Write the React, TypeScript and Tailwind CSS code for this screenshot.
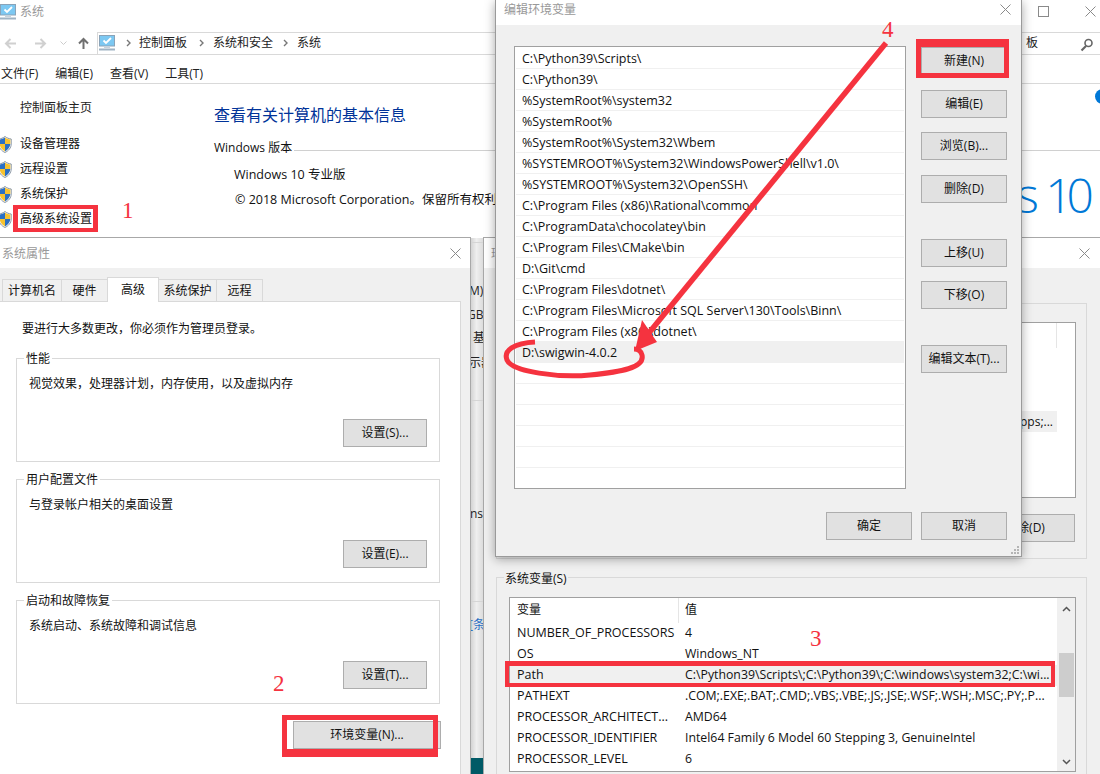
import React from "react";

const sans = "[font-family:'Open_Sans','Noto_Sans_CJK_SC',sans-serif]";

const pathRows = [
  "C:\\Python39\\Scripts\\",
  "C:\\Python39\\",
  "%SystemRoot%\\system32",
  "%SystemRoot%",
  "%SystemRoot%\\System32\\Wbem",
  "%SYSTEMROOT%\\System32\\WindowsPowerShell\\v1.0\\",
  "%SYSTEMROOT%\\System32\\OpenSSH\\",
  "C:\\Program Files (x86)\\Rational\\common",
  "C:\\ProgramData\\chocolatey\\bin",
  "C:\\Program Files\\CMake\\bin",
  "D:\\Git\\cmd",
  "C:\\Program Files\\dotnet\\",
  "C:\\Program Files\\Microsoft SQL Server\\130\\Tools\\Binn\\",
  "C:\\Program Files (x86)\\dotnet\\",
  "D:\\swigwin-4.0.2",
  "",
  "",
  "",
  "",
  "",
  "",
];

const sysVars = [
  ["NUMBER_OF_PROCESSORS", "4"],
  ["OS", "Windows_NT"],
  ["Path", "C:\\Python39\\Scripts\\;C:\\Python39\\;C:\\windows\\system32;C:\\wi..."],
  ["PATHEXT", ".COM;.EXE;.BAT;.CMD;.VBS;.VBE;.JS;.JSE;.WSF;.WSH;.MSC;.PY;.P..."],
  ["PROCESSOR_ARCHITECT...", "AMD64"],
  ["PROCESSOR_IDENTIFIER", "Intel64 Family 6 Model 60 Stepping 3, GenuineIntel"],
  ["PROCESSOR_LEVEL", "6"],
];

const Shield = () => (
  <svg width="14" height="17" viewBox="0 0 14 17" className="shrink-0 -ml-[2px]">
    <path d="M7 0.5 C5 2 3 2.8 0.8 3 V8 C0.8 12 3.5 14.8 7 16.5 C10.5 14.8 13.2 12 13.2 8 V3 C11 2.8 9 2 7 0.5 Z" fill="#fff" stroke="#6b7a8c" strokeWidth="0.8" />
    <path d="M7 1.5 C5.4 2.7 3.6 3.4 1.7 3.6 V8 H7 Z" fill="#2a6fc4" />
    <path d="M7 1.5 C8.6 2.7 10.4 3.4 12.3 3.6 V8 H7 Z" fill="#f7c22f" />
    <path d="M1.7 8 C1.9 11.4 4 13.8 7 15.4 V8 Z" fill="#f7c22f" />
    <path d="M12.3 8 C12.1 11.4 10 13.8 7 15.4 V8 Z" fill="#2a6fc4" />
  </svg>
);

const Monitor = () => (
  <svg width="16" height="16" viewBox="0 0 16 16" className="shrink-0">
    <rect x="0.5" y="0.5" width="15" height="10.5" fill="#7cc8f2" stroke="#8aa3b8" />
    <path d="M4.5 5.5 L7 8 L12 3" fill="none" stroke="#fff" strokeWidth="1.8" />
    <rect x="5" y="11" width="6" height="2" fill="#c6d2dc" />
    <rect x="0" y="13.5" width="16" height="2" fill="#9fb3c4" />
  </svg>
);

const CloseX = ({ color = "#8a8a8a" }: { color?: string }) => (
  <svg width="11" height="11" viewBox="0 0 11 11">
    <path d="M0.5 0.5 L10.5 10.5 M10.5 0.5 L0.5 10.5" stroke={color} strokeWidth="1" />
  </svg>
);

const Chevron = () => (
  <svg width="5" height="8" viewBox="0 0 5 8">
    <path d="M1 1 L4 4 L1 7" fill="none" stroke="#777" strokeWidth="1.4" />
  </svg>
);

const NavArrow = ({ d, color, className = "" }: { d: string; color: string; className?: string }) => (
  <svg width="13" height="13" viewBox="0 0 13 13" className={className}>
    <path d={d} fill="none" stroke={color} strokeWidth="2" />
  </svg>
);

const Btn = ({ children, className = "" }: { children: React.ReactNode; className?: string }) => (
  <div className={`flex h-[28px] items-center justify-center border border-[#adadad] bg-[#e1e1e1] text-[12px] text-[#111] ${className}`}>
    {children}
  </div>
);

const GroupBox = ({ title, desc, btn, className = "" }: { title: string; desc: string; btn: string; className?: string }) => (
  <div className={`relative h-[104px] border border-[#d9d9d9] pl-[12px] pr-[12px] pt-[16px] ${className}`}>
    <span className="absolute -top-[8px] left-[7px] bg-white px-[2px] leading-[16px]">{title}</span>
    <p className="leading-[18px]">{desc}</p>
    <div className="mt-[26px] flex justify-end">
      <Btn className="w-[84px]">{btn}</Btn>
    </div>
  </div>
);

const BackgroundWindow = () => (
  <div className="absolute inset-x-0 top-0 h-[238px] overflow-hidden bg-white">
    <div className="flex h-[32px] items-center pb-[9px] text-[12px] text-[#999]">
      <Monitor />
      <span className="ml-[4px]">系统</span>
      <svg width="11" height="11" viewBox="0 0 11 11" className="ml-auto"><rect x="0.5" y="0.5" width="10" height="10" fill="none" stroke="#8a8a8a" /></svg>
      <div className="ml-[36px] mr-[4px]"><CloseX /></div>
    </div>
    <div className="flex h-[23px] items-center border-b border-[#d9d9d9] text-[12px] text-[#222]">
      <div className="flex w-[97px] items-center pl-[4px]">
        <NavArrow d="M12 6.5 H2 M6.5 2 L2 6.5 L6.5 11" color="#d0d0d0" className="mr-[17px]" />
        <NavArrow d="M1 6.5 H11 M6.5 2 L11 6.5 L6.5 11" color="#d0d0d0" className="mr-[13px]" />
        <svg width="7" height="5" viewBox="0 0 7 5" className="mr-[10px]"><path d="M0.5 0.5 L3.5 3.5 L6.5 0.5" fill="none" stroke="#ccc" /></svg>
        <NavArrow d="M6.5 12 V2 M2 6.5 L6.5 2 L11 6.5" color="#707070" />
      </div>
      <div className="flex h-[23px] flex-1 items-center border-y border-l border-[#d9d9d9] pl-[1px]">
        <Monitor />
        <span className="ml-[11px]"><Chevron /></span>
        <span className="ml-[8px]">控制面板</span>
        <span className="ml-[12px]"><Chevron /></span>
        <span className="ml-[9px]">系统和安全</span>
        <span className="ml-[10px]"><Chevron /></span>
        <span className="ml-[9px]">系统</span>
        <span className="ml-auto mr-[62px]">板</span>
      </div>
    </div>
    <div className="flex h-[29px] items-center gap-[17px] border-b border-[#d9d9d9] pl-[1px] pt-[9px] text-[12px] text-[#222]">
      <span>文件(F)</span>
      <span>编辑(E)</span>
      <span>查看(V)</span>
      <span>工具(T)</span>
    </div>
    <div className="flex">
      <nav className="w-[214px] shrink-0 pl-[20px] pt-[15px] text-[12px] text-[#111]">
        <div className="leading-[18px] text-[#222]">控制面板主页</div>
        <ul className="mt-[18px] flex flex-col gap-[7px] -ml-[20px]">
          {["设备管理器", "远程设置", "系统保护", "高级系统设置"].map((t) => (
            <li key={t} className="flex h-[18px] items-center gap-[8px]">
              <Shield />
              <span>{t}</span>
            </li>
          ))}
        </ul>
      </nav>
      <div className="flex-1 pt-[20px] text-[12.5px] text-[#111]">
        <h1 className="text-[16px] leading-[22px] text-[#003399]">查看有关计算机的基本信息</h1>
        <div className="mt-[13px] flex items-center gap-[2px] text-[12px] leading-[18px]">
          <span>Windows 版本</span>
          <span className="mt-[4px] h-px flex-1 bg-[#d0d0d0]"></span>
        </div>
        <div className="ml-[20px] mt-[9px] leading-[18px]">Windows 10 专业版</div>
        <div className="ml-[21px] mt-[7px] whitespace-nowrap leading-[18px]">© 2018 Microsoft Corporation。保留所有权利</div>
      </div>
    </div>
    <div className="absolute left-[1022px] top-[165px] flex w-[78px] justify-end overflow-hidden pr-[12px]">
      <span className="whitespace-nowrap text-[48px] font-light leading-[60px] tracking-[-6px] text-[#0078d7] [word-spacing:6px]">ws 10</span>
    </div>
    <div className="absolute left-[1095px] top-[89px] h-[15px] w-[15px] rounded-full bg-[#0078d7]"></div>
    <svg width="14" height="14" viewBox="0 0 14 14" className="absolute left-[1080px] top-[38px]">
      <circle cx="8.5" cy="5" r="3.5" fill="none" stroke="#666" strokeWidth="1.6" />
      <path d="M6 8 L1.5 12.5" stroke="#666" strokeWidth="2.2" />
    </svg>
  </div>
);

const StripBehind = () => (
  <div className="absolute left-[470px] top-[238px] flex h-[536px] w-[13px] flex-col items-start overflow-hidden whitespace-nowrap bg-linear-to-r from-[#cfcfcf] via-[#efefef] to-[#dcdcdc] text-[12px] text-[#222]">
    <div className="h-[7px] w-full border-b border-[#d5d5d5]"></div>
    <div className="mt-[39px] -ml-[1px] leading-[18px]">M)</div>
    <div className="mt-[6px] -ml-[3px] leading-[18px]">GB</div>
    <div className="mt-[5px] ml-[3px] leading-[18px]">基</div>
    <div className="mt-[7px] -ml-[1px] leading-[18px]">示器</div>
    <div className="mt-[28px] h-px w-full bg-[#d5d5d5]"></div>
    <div className="mt-[104px] leading-[18px]">ns</div>
    <div className="mt-[78px] h-px w-full bg-[#d5d5d5]"></div>
    <div className="mt-[14px] -ml-[1px] leading-[18px] text-[#2a6fc4]">[条</div>
    <div className="mt-[124px] h-[22px] w-full bg-[#005a66]"></div>
  </div>
);

const SystemProps = () => (
  <div className="absolute left-0 top-[237px] flex h-[537px] w-[471px] flex-col border-r border-t border-[#a8a8a8] bg-[#f0f0f0] text-[12px] text-[#111]">
    <div className="flex h-[30px] items-center justify-between bg-white pl-[2px] pr-[9px] pt-[1px] text-[#999]">
      <span>系统属性</span>
      <CloseX />
    </div>
    <div className="flex h-[34px] items-end pl-[2px]">
      {[
        ["计算机名", "w-[60px]"],
        ["硬件", "w-[47px]"],
      ].map(([t, w]) => (
        <div key={t} className={`flex h-[23px] items-center justify-center border border-b-0 border-[#d9d9d9] -mr-px ${w}`}>{t}</div>
      ))}
      <div className="relative z-10 flex h-[25px] w-[52px] items-center justify-center border border-b-0 border-[#d9d9d9] bg-white pb-[1px]">高级</div>
      {[
        ["系统保护", "w-[59px]"],
        ["远程", "w-[47px]"],
      ].map(([t, w]) => (
        <div key={t} className={`flex h-[23px] items-center justify-center border border-b-0 border-[#d9d9d9] -ml-px ${w}`}>{t}</div>
      ))}
    </div>
    <div className="-mt-px flex-1 border border-b-0 border-l-0 border-[#d9d9d9] bg-white pl-[16px] mr-[9px]">
      <p className="pl-[6px] pt-[18px] leading-[18px]">要进行大多数更改，你必须作为管理员登录。</p>
      <div className="mt-[20px] flex w-[424px] flex-col gap-[17px]">
        <GroupBox title="性能" desc="视觉效果，处理器计划，内存使用，以及虚拟内存" btn="设置(S)..." />
        <GroupBox title="用户配置文件" desc="与登录帐户相关的桌面设置" btn="设置(E)..." />
        <GroupBox title="启动和故障恢复" desc="系统启动、系统故障和调试信息" btn="设置(T)..." />
      </div>
      <div className="mt-[17px] flex justify-end pr-[20px]">
        <Btn className="w-[148px] -mr-[1px]">环境变量(N)...</Btn>
      </div>
    </div>
  </div>
);

const EnvVars = () => (
  <div className="absolute left-[483px] top-[237px] flex h-[537px] w-[617px] flex-col border-l border-t border-[#a8a8a8] bg-[#f0f0f0] text-[12px] text-[#111]">
    <div className="flex h-[30px] items-center justify-between bg-white pl-[7px] pr-[10px] pt-[1px] text-[#999]">
      <span>环</span>
      <CloseX />
    </div>
    <div className="relative ml-[12px] mr-[13px] mt-[35px] h-[256px] border border-[#d9d9d9]">
      <div className="absolute right-[10px] top-[18px] h-[176px] w-[400px] border border-[#a0a0a0] bg-white">
        <div className="absolute right-[18px] top-[88px] h-[21px] w-[80px] bg-[#f0f0f0] pr-[4px] text-right leading-[21px]">pps;...</div>
        <div className="absolute right-[18px] top-0 h-[25px] w-px bg-[#e5e5e5]"></div>
      </div>
      <Btn className="absolute right-[11px] top-[210px] w-[100px]">删除(D)</Btn>
    </div>
    <div className="relative ml-[12px] mr-[13px] mt-[18px] flex-1 border border-b-0 border-[#d9d9d9] pl-[12px] pr-[10px] pt-[19px]">
      <span className="absolute -top-[8px] left-[7px] bg-[#f0f0f0] px-[1px] leading-[18px]">系统变量(S)</span>
      <div className="flex h-[175px] border border-[#a0a0a0] bg-white">
        <div className="min-w-0 flex-1">
          <div className="flex h-[25px] items-start">
            <span className="w-[169px] border-r border-[#e5e5e5] pl-[7px] leading-[24px] h-[25px]">变量</span>
            <span className="pl-[6px] leading-[24px]">值</span>
          </div>
          {sysVars.map(([k, v]) => (
            <div key={k} className={`flex h-[21px] items-center whitespace-nowrap ${k === "Path" ? "bg-[#f0f0f0]" : ""}`}>
              <span className="w-[169px] shrink-0 overflow-hidden pl-[7px] text-[12.5px]">{k}</span>
              <span className="pl-[6px] text-[12.3px]">{v}</span>
            </div>
          ))}
        </div>
        <div className="flex w-[18px] shrink-0 flex-col items-center bg-[#f0f0f0]">
          <svg width="9" height="6" viewBox="0 0 9 6" className="mt-[8px]"><path d="M1 5 L4.5 1.5 L8 5" fill="none" stroke="#555" strokeWidth="1.5" /></svg>
          <div className="mt-[41px] h-[44px] w-[15px] bg-[#cdcdcd]"></div>
          <svg width="9" height="6" viewBox="0 0 9 6" className="mt-auto mb-[6px]"><path d="M1 1 L4.5 4.5 L8 1" fill="none" stroke="#555" strokeWidth="1.5" /></svg>
        </div>
      </div>
    </div>
  </div>
);

const EditDialog = () => (
  <div className="absolute left-[495px] top-0 flex h-[557px] w-[527px] flex-col border-x border-b border-[#9a9a9a] bg-[#f0f0f0] text-[12px] text-[#111] shadow-[0_2px_10px_rgba(0,0,0,0.35)]">
    <div className="flex h-[25px] shrink-0 items-center justify-between bg-white pb-[6px] pl-[8px] pr-[10px] text-[#999]">
      <span>编辑环境变量</span>
      <CloseX />
    </div>
    <div className="flex pl-[18px] pr-[13px] pt-[21px]">
      <div className="h-[443px] w-[392px] overflow-hidden border border-[#a0a0a0] bg-white pl-px pr-px pt-px text-[12.5px]">
        {pathRows.map((r, i) => (
          <div
            key={i}
            className={`h-[21px] whitespace-nowrap pl-[6px] leading-[22px] ${
              r === "D:\\swigwin-4.0.2" ? "bg-[#f0f0f0]" : "border-b border-[#f0f0f0]"
            }`}
          >
            {r}
          </div>
        ))}
      </div>
      <div className="ml-[15px] flex w-[86px] flex-col pt-px">
        <Btn>新建(N)</Btn>
        <Btn className="mt-[15px]">编辑(E)</Btn>
        <Btn className="mt-[14px]">浏览(B)...</Btn>
        <Btn className="mt-[15px]">删除(D)</Btn>
        <Btn className="mt-[36px]">上移(U)</Btn>
        <Btn className="mt-[14px]">下移(O)</Btn>
        <Btn className="mt-[36px]">编辑文本(T)...</Btn>
      </div>
    </div>
    <div className="mt-[23px] flex justify-end gap-[9px] pr-[14px]">
      <Btn className="w-[86px]">确定</Btn>
      <Btn className="w-[86px]">取消</Btn>
    </div>
    <svg width="10" height="10" viewBox="0 0 10 10" className="absolute bottom-[1px] right-[1px]" fill="#b5b5b5">
      <rect x="7" y="1" width="2" height="2" />
      <rect x="4" y="4" width="2" height="2" />
      <rect x="7" y="4" width="2" height="2" />
      <rect x="1" y="7" width="2" height="2" />
      <rect x="4" y="7" width="2" height="2" />
      <rect x="7" y="7" width="2" height="2" />
    </svg>
  </div>
);

const marker = "absolute border-[#f5333f] pointer-events-none";
const num = "absolute font-['Liberation_Serif',serif] text-[23px] leading-none text-[#f5333f]";

const Annotations = () => (
  <>
    <div className={`${marker} left-[13px] top-[205px] h-[27px] w-[85px] border-x-[5px] border-y-[4px]`}></div>
    <div className={`${marker} left-[282px] top-[715px] h-[42px] w-[156px] border-x-[5px] border-t-[5px] border-b-[8px]`}></div>
    <div className={`${marker} left-[505px] top-[661px] h-[26px] w-[550px] border-x-[4px] border-t-[5px] border-b-[4px]`}></div>
    <div className={`${marker} left-[916px] top-[39px] h-[39px] w-[93px] border-x-[5px] border-t-[8px] border-b-[5px]`}></div>
    <span className={`${num} left-[122px] top-[199px]`}>1</span>
    <span className={`${num} left-[273px] top-[672px]`}>2</span>
    <span className={`${num} left-[810px] top-[627px]`}>3</span>
    <span className={`${num} left-[882px] top-[18px]`}>4</span>
    <svg width="1100" height="774" viewBox="0 0 1100 774" className="absolute left-0 top-0">
      <path d="M886 43 L648 334" stroke="#f5333f" strokeWidth="5.5" fill="none" />
      <path d="M635 351 L642 320 L657 342 Z" fill="#f5333f" />
      <path
        d="M535 342 C515 343 503 350 507 360 C512 372 560 378 590 375 C620 372 645 368 642 355 C641 351 638 349 634 349"
        fill="none"
        stroke="#f5333f"
        strokeWidth="5"
      />
    </svg>
  </>
);

export default function App() {
  return (
    <div className={`relative h-[774px] w-[1100px] overflow-hidden bg-white ${sans}`}>
      <BackgroundWindow />
      <StripBehind />
      <SystemProps />
      <EnvVars />
      <EditDialog />
      <Annotations />
    </div>
  );
}
